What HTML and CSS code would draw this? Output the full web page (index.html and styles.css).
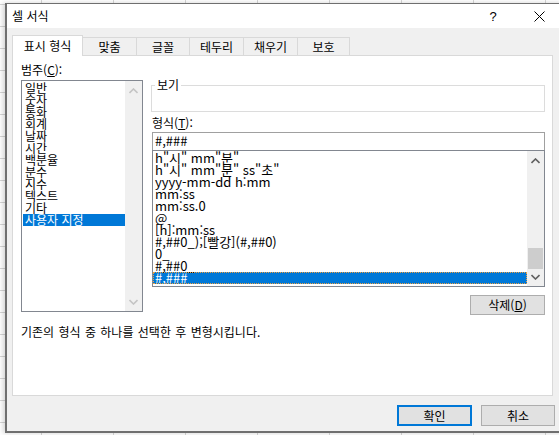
FILE: index.html
```html
<!DOCTYPE html>
<html lang="ko">
<head>
    <meta charset="UTF-8">
    <title>셀 서식</title>
    <link rel="stylesheet" href="styles.css">
</head>
<body>
<div class="dialog">
    <div class="titlebar">
        <span class="title">셀 서식</span>
        <span class="tbtn help">?</span>
        <span class="tbtn close">
            <svg width="11" height="11" viewBox="0 0 11 11"><path d="M0.5 0.5 L10.5 10.5 M10.5 0.5 L0.5 10.5" stroke="#000" stroke-width="1" fill="none"/></svg>
        </span>
    </div>
    <div class="body">
        <div class="tabs">
            <div class="tab active">표시 형식</div>
            <div class="tab w54">맞춤</div>
            <div class="tab w53">글꼴</div>
            <div class="tab w54">테두리</div>
            <div class="tab w54">채우기</div>
            <div class="tab w52">보호</div>
        </div>
        <div class="panel">
            <div class="cols">
                <div class="leftcol">
                    <div class="label">범주(<u>C</u>):</div>
                    <div class="catlist">
                        <div class="items">
                            <div class="item">일반</div>
                            <div class="item">숫자</div>
                            <div class="item">통화</div>
                            <div class="item">회계</div>
                            <div class="item">날짜</div>
                            <div class="item">시간</div>
                            <div class="item">백분율</div>
                            <div class="item">분수</div>
                            <div class="item">지수</div>
                            <div class="item">텍스트</div>
                            <div class="item">기타</div>
                            <div class="item selected">사용자 지정</div>
                        </div>
                        <div class="scrollbar disabled">
                            <svg class="arrow" width="9" height="6" viewBox="0 0 9 6"><path d="M0.5 5 L4.5 1 L8.5 5" stroke="#c4c4c4" stroke-width="1.6" fill="none"/></svg>
                            <svg class="arrow" width="9" height="6" viewBox="0 0 9 6"><path d="M0.5 1 L4.5 5 L8.5 1" stroke="#c4c4c4" stroke-width="1.6" fill="none"/></svg>
                        </div>
                    </div>
                </div>
                <div class="rightcol">
                    <fieldset class="group">
                        <legend>보기</legend>
                        <div class="sample"></div>
                    </fieldset>
                    <div class="label fmt-label">형식(<u>T</u>):</div>
                    <div class="input">#,###</div>
                    <div class="fmtlist">
                        <div class="items">
                            <div class="fitem">h"시" mm"분"</div>
                            <div class="fitem">h"시" mm"분" ss"초"</div>
                            <div class="fitem">yyyy-mm-dd h:mm</div>
                            <div class="fitem">mm:ss</div>
                            <div class="fitem">mm:ss.0</div>
                            <div class="fitem">@</div>
                            <div class="fitem">[h]:mm:ss</div>
                            <div class="fitem">#,##0_);[빨강](#,##0)</div>
                            <div class="fitem">0_</div>
                            <div class="fitem">#,##0_</div>
                            <div class="fitem selected focus">#,###</div>
                        </div>
                        <div class="scrollbar">
                            <svg class="arrow" width="9" height="6" viewBox="0 0 9 6"><path d="M0.5 5 L4.5 1 L8.5 5" stroke="#606060" stroke-width="1.6" fill="none"/></svg>
                            <div class="thumb"></div>
                            <svg class="arrow" width="9" height="6" viewBox="0 0 9 6"><path d="M0.5 1 L4.5 5 L8.5 1" stroke="#606060" stroke-width="1.6" fill="none"/></svg>
                        </div>
                    </div>
                    <div class="delrow">
                        <div class="button del">삭제(<u>D</u>)</div>
                    </div>
                </div>
            </div>
            <div class="desc">기존의 형식 중 하나를 선택한 후 변형시킵니다.</div>
        </div>
        <div class="buttons">
            <div class="button ok">확인</div>
            <div class="button">취소</div>
        </div>
    </div>
</div>
</body>
</html>
```

FILE: styles.css
```css
html, body {
    margin: 0;
    padding: 0;
}
body {
    width: 559px;
    height: 435px;
    overflow: hidden;
    background-color: #fff;
    background-image:
        repeating-linear-gradient(to bottom, #d6d6d6 0, #d6d6d6 1px, transparent 1px, transparent 22px),
        repeating-linear-gradient(to right, #d6d6d6 0, #d6d6d6 1px, transparent 1px, transparent 72px);
    background-position: 0 4px, 41px 0;
    font-family: "Noto Sans CJK KR", sans-serif;
    font-size: 12px;
    color: #000;
}
.dialog {
    margin: 3px 0 0 5px;
    width: 560px;
    height: 430px;
    box-sizing: border-box;
    border: 1px solid #6f6f6f;
    border-left-width: 2px;
    border-bottom-width: 2px;
    background: #f0f0f0;
    box-shadow: -2px 0 5px rgba(0, 0, 0, 0.18);
}
.titlebar {
    height: 24px;
    background: #fff;
    display: flex;
    align-items: center;
}
.title {
    padding-left: 5px;
    line-height: 14px;
}
.tbtn {
    width: 46px;
    height: 24px;
    display: flex;
    align-items: center;
    justify-content: center;
}
.help {
    margin-left: auto;
    font-family: "Liberation Sans", sans-serif;
    font-size: 13px;
}
.close {
    margin-right: 2px;
}
.body {
    padding: 7px 0 0 5px;
}
.tabs {
    display: flex;
    align-items: flex-end;
    height: 20px;
}
.tab {
    box-sizing: border-box;
    height: 18px;
    border: 1px solid #d9d9d9;
    border-left: none;
    border-bottom: none;
    background: #f0f0f0;
    text-align: center;
    line-height: 17px;
}
.tab.active {
    width: 71px;
    height: 21px;
    margin-bottom: -1px;
    border-left: 1px solid #d9d9d9;
    background: #fff;
    line-height: 20px;
    position: relative;
    z-index: 1;
}
.w52 { width: 52px; }
.w53 { width: 53px; }
.w54 { width: 54px; }
.panel {
    box-sizing: border-box;
    width: 541px;
    height: 341px;
    border: 1px solid #d9d9d9;
    background: #fff;
    padding: 7px 6px 0 8px;
}
.cols {
    display: flex;
    gap: 9px;
}
.leftcol {
    width: 122px;
}
.rightcol {
    width: 393px;
}
.label {
    line-height: 14px;
    height: 14px;
}
.catlist {
    margin-top: 3px;
    box-sizing: border-box;
    height: 232px;
    border: 1px solid #828790;
    display: flex;
}
.items {
    flex: 1;
    padding: 1px 0 0 1px;
}
.item {
    height: 12px;
    line-height: 12px;
    padding-left: 2px;
    white-space: nowrap;
}
.selected {
    background: #0078d7;
    color: #fff;
}
.scrollbar {
    width: 17px;
    background: #f0f0f0;
    display: flex;
    flex-direction: column;
    align-items: center;
    justify-content: space-between;
    padding: 7px 0 6px;
    box-sizing: border-box;
}
.thumb {
    width: 15px;
    height: 21px;
    margin-top: auto;
    margin-bottom: 5px;
    background: #cdcdcd;
}
.group {
    margin: 15px 0 0 -1px;
    padding: 0;
    border: 1px solid #dcdcdc;
    min-width: 0;
}
.group legend {
    margin-left: 3px;
    padding: 0 2px;
    line-height: 14px;
}
.sample {
    height: 19px;
}
.fmt-label {
    margin-top: 4px;
}
.input {
    margin-top: 2px;
    box-sizing: border-box;
    height: 18px;
    border: 1px solid #a0a0a0;
    border-bottom: none;
    padding-left: 2px;
    font-size: 13px;
    line-height: 16px;
}
.fmtlist {
    box-sizing: border-box;
    height: 137px;
    border: 1px solid #828790;
    display: flex;
}
.fmtlist .items {
    padding: 1px 0 0 0;
}
.fitem {
    height: 12px;
    line-height: 12px;
    padding-left: 2px;
    font-size: 13px;
    white-space: nowrap;
}
.fitem.focus {
    outline: 1px dotted #f0a040;
    outline-offset: -1px;
}
.delrow {
    display: flex;
    justify-content: flex-end;
    margin-top: 8px;
}
.button {
    box-sizing: border-box;
    width: 74px;
    height: 21px;
    border: 1px solid #adadad;
    background: #e1e1e1;
    text-align: center;
    line-height: 19px;
}
.button.del {
    width: 75px;
    height: 20px;
    line-height: 18px;
}
.desc {
    margin-top: 10px;
    line-height: 14px;
    word-spacing: 1px;
}
.buttons {
    display: flex;
    justify-content: flex-end;
    gap: 9px;
    width: 543px;
    margin-top: 9px;
}
.button.ok {
    width: 75px;
    border: 2px solid #0078d7;
    line-height: 17px;
}
```
